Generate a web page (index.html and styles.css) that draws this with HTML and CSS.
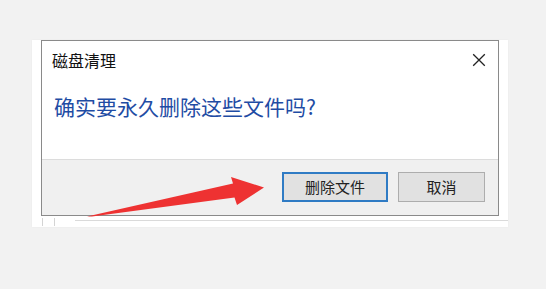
FILE: index.html
```html
<!DOCTYPE html>
<html lang="zh-CN">
<head>
<meta charset="utf-8">
<title>磁盘清理</title>
<link rel="stylesheet" href="styles.css">
</head>
<body>
<div class="stage">
  <div class="backwin">
    <div class="dialog">
      <div class="content">
        <div class="titlebar">
          <span class="title">磁盘清理</span>
          <svg class="close" width="14" height="14" viewBox="0 0 14 14"><path d="M1.2 1.2 L12.8 12.8 M12.8 1.2 L1.2 12.8" stroke="#222" stroke-width="1.3" fill="none"/></svg>
        </div>
        <div class="question">确实要永久删除这些文件吗?</div>
      </div>
      <div class="footer">
        <button class="btn btn-default">删除文件</button>
        <button class="btn">取消</button>
      </div>
    </div>
    <div class="ghost">
      <span class="ghost-box"></span>
      <span class="ghost-line"></span>
    </div>
  </div>
</div>
<svg class="arrow" width="546" height="289" viewBox="0 0 546 289">
  <polygon points="87,216.5 233,183.5 231,177 264,187.5 237,205 234.5,197.5 92,216.5" fill="#ee3232"/>
</svg>
</body>
</html>
```
FILE: styles.css
```css
html, body {
  margin: 0;
  padding: 0;
}
body {
  background: #f2f2f2;
  font-family: "Noto Sans CJK SC", "Microsoft YaHei", sans-serif;
  width: 546px;
  height: 289px;
  overflow: hidden;
  position: relative;
}
.stage {
  padding: 40px 0 0 32px;
}
.backwin {
  width: 476px;
  height: 187px;
  background: #fff;
  box-shadow: 0 0 2px rgba(0,0,0,0.04);
}
.dialog {
  margin-left: 9px;
  width: 456px;
  height: 174px;
  border: 1px solid #8a8a8a;
  background: #fff;
  display: flex;
  flex-direction: column;
}
.content {
  height: 118px;
  background: #fff;
}
.titlebar {
  display: flex;
  justify-content: space-between;
  align-items: center;
  padding: 9px 12px 0 10px;
  height: 20px;
}
.title {
  font-size: 16px;
  line-height: 20px;
  color: #111;
}
.close {
  display: block;
}
.question {
  margin-top: 22px;
  padding-left: 12px;
  font-size: 21px;
  line-height: 28px;
  color: #1f4ca4;
}
.footer {
  flex: 1;
  border-top: 1px solid #dcdcdc;
  background: #f0f0f0;
  display: flex;
  justify-content: flex-end;
  align-items: flex-start;
  gap: 10px;
  padding: 12px 13px 0 0;
}
.btn {
  font-family: "Noto Sans CJK SC", "Microsoft YaHei", sans-serif;
  font-size: 15px;
  color: #222;
  background: #e1e1e1;
  border: 1px solid #adadad;
  height: 30px;
  width: 87px;
  padding: 0;
  margin: 0;
  line-height: 26px;
}
.btn-default {
  width: 106px;
  border: 2px solid #2f7bc4;
}
.ghost {
  display: flex;
  align-items: flex-start;
  margin-top: 2px;
  padding-left: 10px;
}
.ghost-box {
  width: 11px;
  height: 8px;
  border-left: 1px solid #d4d4d4;
  border-right: 1px solid #d4d4d4;
}
.ghost-line {
  margin-left: 20px;
  margin-top: 2px;
  flex: 1;
  height: 1px;
  background: #dadada;
}
.arrow {
  position: absolute;
  left: 0;
  top: 0;
  pointer-events: none;
}
```
